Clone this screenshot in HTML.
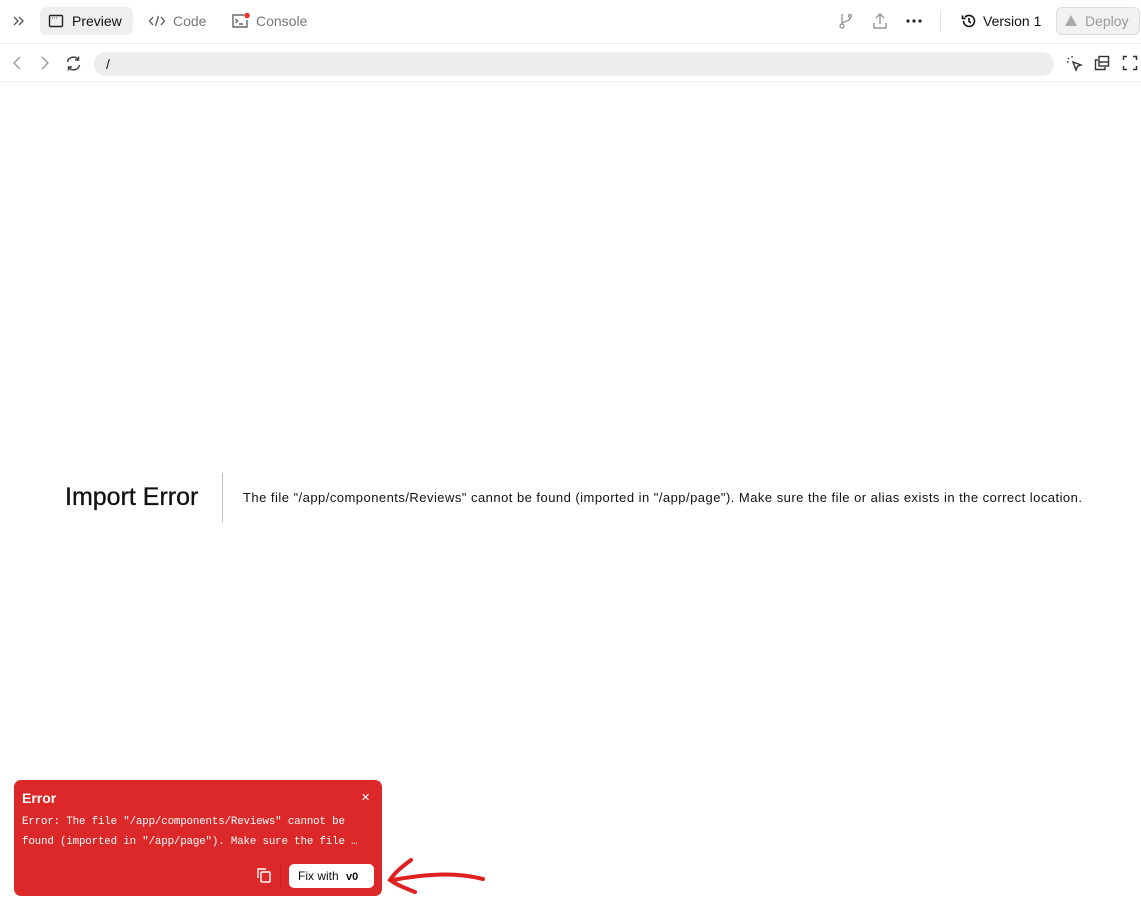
<!DOCTYPE html>
<html><head><meta charset="utf-8"><style>
*{box-sizing:border-box;margin:0;padding:0}
body{width:1141px;height:904px;background:#fff;font-family:"Liberation Sans",sans-serif;position:relative;overflow:hidden;color:#111}
.top{position:absolute;left:0;top:0;width:1141px;height:44px;border-bottom:1px solid #eee}
.tab{position:absolute;top:7px;height:28px;display:flex;align-items:center;font-size:14px;color:#777}
.bar2{position:absolute;left:0;top:45px;width:1141px;height:37px;border-bottom:1px solid #eee}
.url{position:absolute;left:94px;top:7px;width:960px;height:24px;background:#ededed;border-radius:12px;font-size:14px;padding-left:12px;line-height:24px}
svg{position:absolute}
</style></head><body>
<div class="top">
<svg style="left:12px;top:14px" width="14" height="14" viewBox="0 0 14 14" fill="none" stroke="#555" stroke-width="1.4"><path d="M2 3l4 4-4 4M7 3l4 4-4 4"/></svg>
<div class="tab" style="left:40px;width:93px;background:#efefef;border-radius:6px;color:#111;padding-left:32px">Preview</div>
<svg style="left:48px;top:13px" width="16" height="16" viewBox="0 0 16 16" fill="none" stroke="#222" stroke-width="1.4"><rect x="1.5" y="2.5" width="13" height="11" rx="1"/><path d="M4 5h.5M6 5h.5M8 5h.5"/></svg>
<svg style="left:148px;top:13px" width="18" height="16" viewBox="0 0 18 16" fill="none" stroke="#666" stroke-width="1.4"><path d="M5 4L1.5 8 5 12M13 4l3.5 4-3.5 4M10.5 3l-3 10"/></svg>
<div class="tab" style="left:173px">Code</div>
<svg style="left:231px;top:12px" width="20" height="18" viewBox="0 0 20 18" fill="none" stroke="#666" stroke-width="1.4"><path d="M13 3H2v12h14V8"/><path d="M4.5 7l2 2-2 2M8 12h4"/><circle cx="16" cy="3.5" r="2.8" fill="#e53935" stroke="none"/></svg>
<div class="tab" style="left:256px">Console</div>
<svg style="left:838px;top:12px" width="16" height="18" viewBox="0 0 16 18" fill="none" stroke="#999" stroke-width="1.4"><circle cx="4" cy="14" r="2"/><circle cx="12" cy="4" r="1.5"/><path d="M4 2v10M12 6c0 4-8 3-8 6"/></svg>
<svg style="left:872px;top:12px" width="16" height="18" viewBox="0 0 16 18" fill="none" stroke="#999" stroke-width="1.4"><path d="M8 12V2M4 6l4-4 4 4M2 11v5h12v-5"/></svg>
<svg style="left:906px;top:19px" width="16" height="4" viewBox="0 0 16 4" fill="#222"><circle cx="2" cy="2" r="1.6"/><circle cx="8" cy="2" r="1.6"/><circle cx="14" cy="2" r="1.6"/></svg>
<div style="position:absolute;left:940px;top:10px;width:1px;height:22px;background:#e5e5e5"></div>
<svg style="left:961px;top:13px" width="16" height="16" viewBox="0 0 16 16" fill="none" stroke="#111" stroke-width="1.6"><path d="M2.5 8A5.5 5.5 0 1 0 4 4.2M1.5 2.5V5.5H4.5M8 5v3.5l2 1.5"/></svg>
<div class="tab" style="left:983px;color:#111">Version 1</div>
<div style="position:absolute;left:1056px;top:7px;width:84px;height:28px;border:1px solid #ddd;background:#f2f2f2;border-radius:6px;font-size:14px;color:#999;line-height:26px;padding-left:28px">Deploy</div>
<svg style="left:1065px;top:15px" width="12" height="11" viewBox="0 0 12 11" fill="#aaa"><path d="M6 0l6 11H0z"/></svg>
</div>
<div class="bar2">
<svg style="left:12px;top:11px" width="10" height="14" viewBox="0 0 10 14" fill="none" stroke="#999" stroke-width="1.4"><path d="M8 1L2 7l6 6"/></svg>
<svg style="left:40px;top:11px" width="10" height="14" viewBox="0 0 10 14" fill="none" stroke="#999" stroke-width="1.4"><path d="M2 1l6 6-6 6"/></svg>
<svg style="left:65px;top:10px" width="17" height="17" viewBox="0 0 17 17" fill="none" stroke="#444" stroke-width="1.5"><path d="M2.5 7A6 6 0 0 1 13.5 5M14.5 10A6 6 0 0 1 3.5 12M13.5 1.5V5H10M3.5 15.5V12H7"/></svg>
<div class="url">/</div>
<svg style="left:1066px;top:10px" width="17" height="17" viewBox="0 0 17 17" fill="none" stroke="#333" stroke-width="1.4"><path d="M7 7l8 3-3.5 1.2L10 15z"/><path d="M2 3l1 1M6 1v1.5M1 7h1.5"/></svg>
<svg style="left:1094px;top:10px" width="16" height="16" viewBox="0 0 16 16" fill="none" stroke="#333" stroke-width="1.4"><path d="M4 5H1.5v9.5H11V12"/><rect x="5" y="1.5" width="9.5" height="9.5"/><path d="M5 7h9.5"/></svg>
<svg style="left:1122px;top:10px" width="16" height="16" viewBox="0 0 16 16" fill="none" stroke="#333" stroke-width="1.5"><path d="M1.5 5V1.5H5M11 1.5h3.5V5M14.5 11v3.5H11M5 14.5H1.5V11"/></svg>
</div>
<div style="position:absolute;left:65px;top:483px;font-size:25px;color:#111;-webkit-text-stroke:0.3px #111">Import Error</div>
<div style="position:absolute;left:222px;top:473px;width:1px;height:49px;background:#bbb"></div>
<div style="position:absolute;left:243px;top:490px;font-size:13px;white-space:nowrap;letter-spacing:0.47px">The file "/app/components/Reviews" cannot be found (imported in "/app/page"). Make sure the file or alias exists in the correct location.</div>
<div style="position:absolute;left:14px;top:780px;width:368px;height:116px;background:#dc2828;border-radius:7px;color:#fff">
<div style="position:absolute;left:8px;top:10px;font-size:14px;font-weight:bold">Error</div>
<div style="position:absolute;right:12px;top:9px;font-size:15px">×</div>
<div style="position:absolute;left:8px;top:32px;font-family:'Liberation Mono',monospace;font-size:10.8px;letter-spacing:-0.15px;line-height:20px;white-space:pre">Error: The file "/app/components/Reviews" cannot be
found (imported in "/app/page"). Make sure the file …</div>
<svg style="left:242px;top:87px" width="16" height="17" viewBox="0 0 16 17" fill="none" stroke="#fff" stroke-width="1.4"><path d="M2 11V2h8"/><rect x="5" y="5" width="9" height="10" rx="1"/></svg>
<div style="position:absolute;left:266px;top:85px;width:1px;height:22px;background:#c22"></div>
<div style="position:absolute;left:275px;top:84px;width:85px;height:24px;background:#fff;border-radius:5px;color:#111;font-size:12px;line-height:24px;padding-left:9px">Fix with <b style="font-size:11px;margin-left:4px">v0</b></div>
</div>
<svg style="left:385px;top:852px" width="102" height="44" viewBox="0 0 102 44" fill="none" stroke="#e02020" stroke-width="4" stroke-linecap="round"><path d="M98 27C70 20 40 22 8 28M26 8C18 14 10 20 5 28C12 33 20 36 30 40"/></svg>
</body></html>
